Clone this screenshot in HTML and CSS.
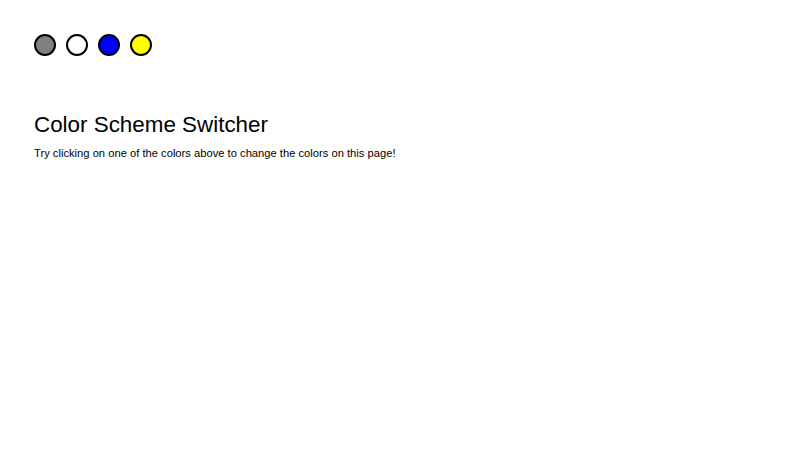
FILE: index.html
```html
<!DOCTYPE html>
<html>
<head>
<meta charset="utf-8">
<link rel="stylesheet" href="styles.css">
</head>
<body>
<div class="page">
  <div class="swatches">
    <button class="swatch gray" aria-label="gray"></button>
    <button class="swatch white" aria-label="white"></button>
    <button class="swatch blue" aria-label="blue"></button>
    <button class="swatch yellow" aria-label="yellow"></button>
  </div>
  <h1 class="title">Color Scheme Switcher</h1>
  <p class="intro">Try clicking on one of the colors above to change the colors on this page!</p>
</div>
</body>
</html>
```
FILE: styles.css
```css
html, body {
  margin: 0;
  background: #fff;
  color: #000;
  font-family: "Liberation Sans", Arial, sans-serif;
}
.page {
  padding: 34px;
}
.swatches {
  display: flex;
  gap: 10px;
}
.swatch {
  width: 22px;
  height: 22px;
  border: 2px solid #000;
  border-radius: 50%;
  padding: 0;
  margin: 0;
  box-sizing: border-box;
}
.gray { background: #808080; }
.white { background: #fff; }
.blue { background: #0000ff; }
.yellow { background: #ffff00; }
.title {
  font-size: 22.4px;
  font-weight: normal;
  margin: 55px 0 0;
  line-height: 28px;
}
.intro {
  font-size: 11.2px;
  margin: 6px 0 0;
  line-height: 16px;
}
```
